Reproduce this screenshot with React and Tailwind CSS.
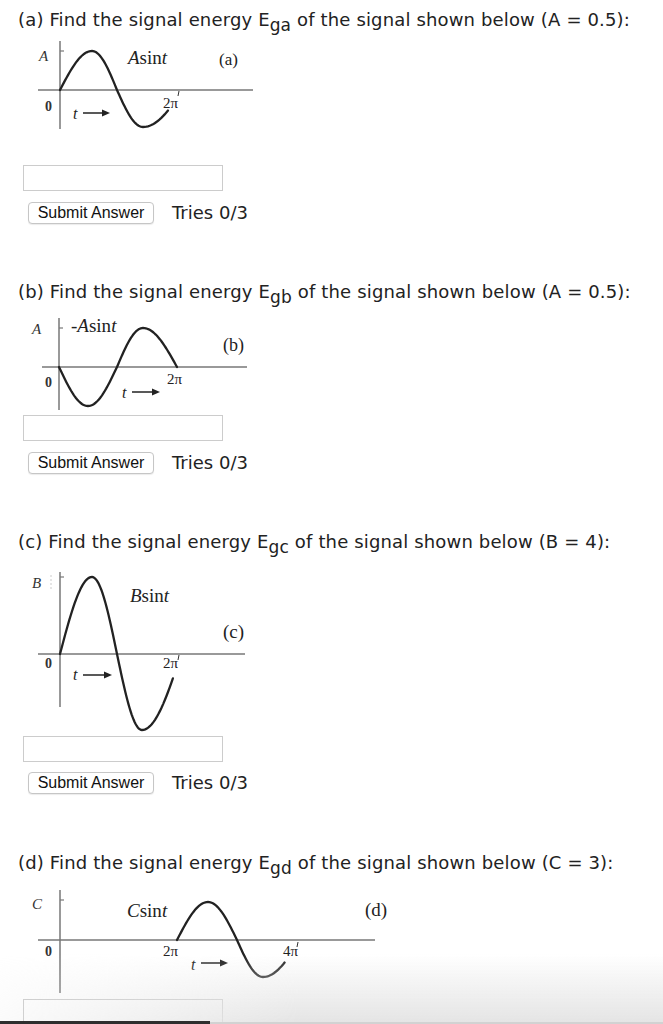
import React from "react";

function wavePath(keys, endX) {
  let d = "";
  let first = true;
  for (let i = 0; i < keys.length - 1; i++) {
    const [ax, ay, ak] = keys[i];
    const [bx, by] = keys[i + 1];
    const N = 24;
    for (let s = 0; s <= N; s++) {
      const u = s / N;
      const x = ax + (bx - ax) * u;
      if (x > endX + 0.01) return d;
      const f = ak === "z" ? Math.sin((u * Math.PI) / 2) : 1 - Math.cos((u * Math.PI) / 2);
      const y = ay + (by - ay) * f;
      d += (first ? "M" : " L") + x.toFixed(2) + " " + y.toFixed(2);
      first = false;
    }
  }
  return d;
}

const SERIF = "'Liberation Serif', 'Times New Roman', serif";

function Arrow({ x1, x2, y }) {
  return (
    <g>
      <line x1={x1} y1={y} x2={x2 - 5} y2={y} stroke="#222" strokeWidth="1.5" />
      <polygon points={`${x2 - 8},${y - 3.5} ${x2},${y} ${x2 - 8},${y + 3.5}`} fill="#222" />
    </g>
  );
}

function Graph({ top, height, width = 400, children }) {
  return (
    <svg
      width={width}
      height={height}
      viewBox={`18 ${top} ${width} ${height}`}
      className="block"
      style={{ fontFamily: SERIF }}
    >
      {children}
    </svg>
  );
}

function GraphA() {
  return (
    <Graph top={38} height={95}>
      <line x1="60" y1="41" x2="60" y2="129" stroke="#777" strokeWidth="1.5" />
      <line x1="60" y1="51" x2="64" y2="51" stroke="#777" strokeWidth="1.2" />
      <line x1="38" y1="90" x2="253" y2="90" stroke="#777" strokeWidth="1.5" />
      <path
        d={wavePath([[60, 90, "z"], [92, 51, "e"], [117, 90, "z"], [143, 127, "e"], [183, 90, "z"]], 168)}
        fill="none" stroke="#222" strokeWidth="2.3" strokeLinecap="round"
      />
      <text x="39" y="61" fontSize="15" fontStyle="italic" fill="#333">A</text>
      <text x="128" y="64" fontSize="19" fill="#222"><tspan fontStyle="italic">A</tspan>sin<tspan fontStyle="italic">t</tspan></text>
      <text x="219" y="65" fontSize="17" fill="#222">(a)</text>
      <text x="45" y="111" fontSize="14" fontWeight="bold" fill="#333">0</text>
      <text x="163" y="108" fontSize="15" fill="#222">2π</text>
      <line x1="179" y1="91" x2="178" y2="96" stroke="#333" strokeWidth="1" />
      <text x="73" y="119" fontSize="16" fontStyle="italic" fill="#222">t</text>
      <Arrow x1={83} x2={110} y={113} />
    </Graph>
  );
}

function GraphB() {
  return (
    <Graph top={310} height={100}>
      <line x1="59" y1="318" x2="59" y2="410" stroke="#777" strokeWidth="1.5" />
      <line x1="59" y1="328" x2="63" y2="328" stroke="#777" strokeWidth="1.2" />
      <line x1="42" y1="367" x2="247" y2="367" stroke="#777" strokeWidth="1.5" />
      <path
        d={wavePath([[59, 367, "z"], [88, 406, "e"], [117, 367, "z"], [143, 328, "e"], [177, 367, "z"]], 177)}
        fill="none" stroke="#222" strokeWidth="2.3" strokeLinecap="round"
      />
      <text x="32" y="334" fontSize="15" fontStyle="italic" fill="#333">A</text>
      <text x="71" y="332" fontSize="19" fill="#222"><tspan fontStyle="italic">-A</tspan>sin<tspan fontStyle="italic">t</tspan></text>
      <text x="223" y="351" fontSize="18" fill="#222">(b)</text>
      <text x="45" y="387" fontSize="14" fontWeight="bold" fill="#333">0</text>
      <text x="167" y="384" fontSize="15" fill="#222">2π</text>
      <text x="122" y="398" fontSize="16" fontStyle="italic" fill="#222">t</text>
      <Arrow x1={132} x2={160} y={392} />
    </Graph>
  );
}

function GraphC() {
  return (
    <Graph top={560} height={175}>
      <line x1="60" y1="572" x2="60" y2="707" stroke="#777" strokeWidth="1.5" />
      <line x1="60" y1="577" x2="64" y2="577" stroke="#777" strokeWidth="1.2" />
      <line x1="51" y1="575" x2="51" y2="590" stroke="#ccc" strokeWidth="1" strokeDasharray="2 2" />
      <line x1="38" y1="654" x2="245" y2="654" stroke="#777" strokeWidth="1.5" />
      <path
        d={wavePath([[60, 654, "z"], [92, 577, "e"], [117, 654, "z"], [142, 730, "e"], [181, 654, "z"]], 173)}
        fill="none" stroke="#222" strokeWidth="2.3" strokeLinecap="round"
      />
      <text x="32" y="588" fontSize="15" fontStyle="italic" fill="#333">B</text>
      <text x="130" y="602" fontSize="19" fill="#222"><tspan fontStyle="italic">B</tspan>sin<tspan fontStyle="italic">t</tspan></text>
      <text x="223" y="638" fontSize="19" fill="#222">(c)</text>
      <text x="45" y="668" fontSize="14" fontWeight="bold" fill="#333">0</text>
      <text x="163" y="668" fontSize="15" fill="#222">2π</text>
      <line x1="179" y1="655" x2="178" y2="660" stroke="#333" strokeWidth="1" />
      <text x="73" y="680" fontSize="16" fontStyle="italic" fill="#222">t</text>
      <Arrow x1={83} x2={112} y={675} />
    </Graph>
  );
}

function GraphD() {
  return (
    <Graph top={885} height={112}>
      <line x1="60" y1="890" x2="60" y2="993" stroke="#777" strokeWidth="1.5" />
      <line x1="60" y1="900" x2="64" y2="900" stroke="#777" strokeWidth="1.2" />
      <line x1="38" y1="940" x2="375" y2="940" stroke="#777" strokeWidth="1.5" />
      <path
        d={wavePath([[177, 940, "z"], [208, 902, "e"], [237, 940, "z"], [263, 977, "e"], [300, 940, "z"]], 285)}
        fill="none" stroke="#222" strokeWidth="2.3" strokeLinecap="round"
      />
      <text x="32" y="909" fontSize="15" fontStyle="italic" fill="#333">C</text>
      <text x="127" y="917" fontSize="19" fill="#222"><tspan fontStyle="italic">C</tspan>sin<tspan fontStyle="italic">t</tspan></text>
      <text x="365" y="916" fontSize="19" fill="#222">(d)</text>
      <text x="45" y="956" fontSize="14" fontWeight="bold" fill="#333">0</text>
      <text x="163" y="956" fontSize="15" fill="#222">2π</text>
      <text x="283" y="956" fontSize="15" fill="#222">4π</text>
      <line x1="298" y1="942" x2="297" y2="947" stroke="#333" strokeWidth="1" />
      <text x="191" y="970" fontSize="16" fontStyle="italic" fill="#222">t</text>
      <Arrow x1={201} x2={228} y={963} />
    </Graph>
  );
}

function Heading({ label, sub, value }) {
  return (
    <div className="h-[24px] leading-[24px] text-[18px] tracking-[0.15px] text-[#222] whitespace-nowrap">
      ({label}) Find the signal energy E
      <span className="relative top-[5px] text-[17px]">{sub}</span> of the signal shown below ({value}):
    </div>
  );
}

function AnswerInput({ className = "" }) {
  return <div className={"ml-[5px] w-[200px] h-[26px] border border-[#cccccc] bg-white " + className} />;
}

function SubmitRow({ className = "" }) {
  return (
    <div className={"flex items-center h-[22px] " + className}>
      <div className="ml-[10px] h-[22px] w-[126px] flex items-center justify-center rounded-[4px] border border-[#c6c6c6] bg-white shadow-[0_1px_1px_rgba(0,0,0,0.08)] text-[16px] text-[#111] font-['Liberation_Sans',Arial,sans-serif]">
        Submit Answer
      </div>
      <div className="ml-[18px] text-[18px] text-[#222] leading-[22px]">Tries 0/3</div>
    </div>
  );
}

export default function App() {
  return (
    <div className="relative w-[663px] h-[1024px] overflow-hidden bg-white font-['DejaVu_Sans',Verdana,sans-serif]">
      <div className="pl-[18px] flex flex-col">
        {/* (a) */}
        <div className="mt-[8px]">
          <Heading label="a" sub="ga" value="A = 0.5" />
        </div>
        <div className="mt-[6px]"><GraphA /></div>
        <AnswerInput className="mt-[32px]" />
        <SubmitRow className="mt-[11px]" />

        {/* (b) */}
        <div className="mt-[56px]">
          <Heading label="b" sub="gb" value="A = 0.5" />
        </div>
        <div className="mt-[6px]"><GraphB /></div>
        <AnswerInput className="mt-[5px]" />
        <SubmitRow className="mt-[11px]" />

        {/* (c) */}
        <div className="mt-[56px]">
          <Heading label="c" sub="gc" value="B = 4" />
        </div>
        <div className="mt-[6px]"><GraphC /></div>
        <AnswerInput className="mt-[1px]" />
        <SubmitRow className="mt-[10px]" />

        {/* (d) */}
        <div className="mt-[57px]">
          <Heading label="d" sub="gd" value="C = 3" />
        </div>
        <div className="mt-[10px]"><GraphD /></div>
        <AnswerInput className="mt-[2px]" />
      </div>

      {/* bottom fade overlay */}
      <div className="pointer-events-none absolute inset-x-0 bottom-0 h-[70px] bg-[linear-gradient(to_bottom,rgba(228,228,228,0),rgba(228,228,228,1))] [mask-image:linear-gradient(to_right,rgba(0,0,0,0.15),black_45%)]" />
      <div className="absolute left-0 bottom-0 w-[210px] h-[3px] bg-[#2e2e2e]" />
      <div className="absolute left-[210px] right-0 bottom-0 h-[2px] bg-[#d2d2d2]" />
    </div>
  );
}
